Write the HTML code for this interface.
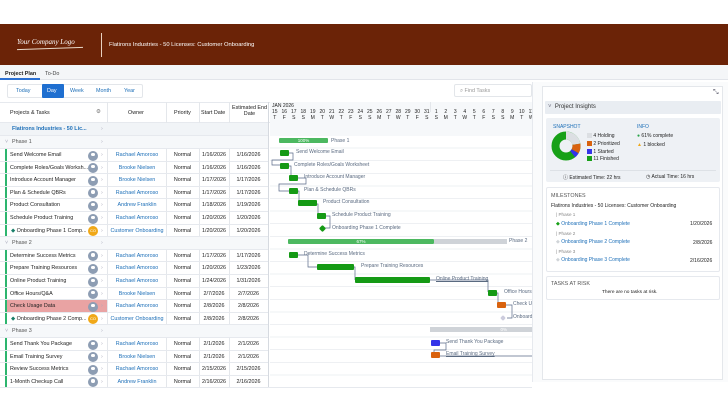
<!DOCTYPE html>
<html><head><meta charset="utf-8"><style>
*{margin:0;padding:0;box-sizing:border-box}
body{width:728px;height:410px;overflow:hidden;background:#fff;font-family:"Liberation Sans",sans-serif;font-size:5.4px;color:#222;position:relative}
.a{position:absolute}
.hdr{left:0;top:24px;width:728px;height:41px;background:#6b2307}
.row{position:absolute;left:0;width:268px;height:12.6px;border-bottom:1px solid #e6e9ee}
.row div{position:absolute;top:0;line-height:12px;white-space:nowrap}
.c1{left:10px}.ow{left:108px;width:58px;text-align:center;color:#1d6fb8}.pr{left:166px;width:33px;text-align:center}.sd{left:199px;width:30px;text-align:center}.ed{left:229px;width:39px;text-align:center}
.av{left:88px!important;top:1.5px!important;width:10px;height:10px;border-radius:50%;background:#8d9db3}
.av::after{content:"";position:absolute;left:3.3px;top:2px;width:3.4px;height:3.4px;border-radius:50%;background:#fff}
.co{left:88px!important;top:1.5px!important;width:10px;height:10px;border-radius:50%;background:#f0a818;color:#fff;font-size:4px;line-height:10px!important;text-align:center}
.ch{left:101px;color:#aab}
.bar{position:absolute;height:6px;border-radius:1px}
.lb{position:absolute;font-size:5px;color:#5a6a80;white-space:nowrap}
.g{background:#159a15}
.vl{position:absolute;width:1px;background:#e4e7eb}
</style></head><body>
<div class="a hdr"></div>
<div class="a" style="left:17px;top:38px;color:#fff;font-style:italic;font-size:7px;font-family:'Liberation Serif',serif">Your Company Logo</div>
<div class="a" style="left:17px;top:48px;width:66px;height:1px;background:#e8d8c8;transform:rotate(-2deg)"></div>
<div class="a" style="left:101px;top:33px;width:1px;height:24px;background:#e8d0c0"></div>
<div class="a" style="left:109px;top:42px;color:#fff;font-size:5.8px">Flatirons Industries - 50 Licenses: Customer Onboarding</div>
<div class="a" style="left:0;top:65px;width:728px;height:15px;background:#f4f6f8;border-bottom:1px solid #e2e5ea"></div>
<div class="a" style="left:5px;top:71px;font-weight:bold;font-size:5.4px">Project Plan</div>
<div class="a" style="left:45px;top:71px;font-size:5.4px;color:#444">To-Do</div>
<div class="a" style="left:0;top:78px;width:40px;height:2px;background:#2a6fd1"></div>
<div class="a" style="left:7px;top:84px;width:136px;height:14px;border:1px solid #e3e6ea;border-radius:2px"></div>
<div class="a" style="left:16px;top:88px;color:#1d6fb8">Today</div>
<div class="a" style="left:42px;top:84px;width:22px;height:14px;background:#1f6fd0;border-radius:1px"></div>
<div class="a" style="left:47px;top:88px;color:#fff">Day</div>
<div class="a" style="left:70px;top:88px;color:#1d6fb8">Week</div>
<div class="a" style="left:96px;top:88px;color:#1d6fb8">Month</div>
<div class="a" style="left:124px;top:88px;color:#1d6fb8">Year</div>
<div class="a" style="left:454px;top:84px;width:78px;height:13px;border:1px solid #e3e6ea;border-radius:2px"></div>
<div class="a" style="left:460px;top:88px;color:#999">⌕ Find Tasks</div>
<div class="a" style="left:0;top:102px;width:532px;height:21px;border-top:1px solid #e6e9ee;border-bottom:1px solid #e6e9ee"></div>
<div class="a" style="left:10px;top:110px">Projects &amp; Tasks</div>
<div class="a" style="left:96px;top:109px;color:#777">⚙</div>
<div class="a" style="left:128px;top:110px">Owner</div>
<div class="a" style="left:174px;top:110px">Priority</div>
<div class="a" style="left:201px;top:110px">Start Date</div>
<div class="a" style="left:230px;top:105px;width:39px;text-align:center;line-height:6px">Estimated End Date</div>
<div class="vl" style="left:107px;top:102px;height:285px"></div>
<div class="vl" style="left:166px;top:102px;height:285px"></div>
<div class="vl" style="left:199px;top:102px;height:285px"></div>
<div class="vl" style="left:229px;top:102px;height:285px"></div>
<div class="vl" style="left:268px;top:102px;height:285px;background:#d6dae0"></div>
<div class="a" style="left:0;top:123px;width:268px;height:13px;background:#f1f4f7"></div>
<div class="a" style="left:0;top:136px;width:268px;height:12.6px;background:#f6f8fa"></div>
<div class="a" style="left:0;top:237px;width:268px;height:12.6px;background:#f6f8fa"></div>
<div class="a" style="left:0;top:325px;width:268px;height:12.6px;background:#f6f8fa"></div>
<div class="a" style="left:6px;top:300.2px;width:101px;height:12.6px;background:#e9a3a3"></div>
<div class="a" style="left:5px;top:149px;width:1.5px;height:88px;background:#2db56e"></div>
<div class="a" style="left:5px;top:250px;width:1.5px;height:75px;background:#2db56e"></div>
<div class="a" style="left:5px;top:338px;width:1.5px;height:50px;background:#2db56e"></div>

<div class="row" style="top:123px"><div class="c1" style="left:12px;color:#1d6fb8;font-weight:bold">Flatirons Industries - 50 Lic...</div><div class="ch">›</div></div>
<div class="row" style="top:136px"><div style="left:5px;color:#aab">˅</div><div class="c1" style="left:12px;color:#555">Phase 1</div><div class="ch">›</div></div>
<div class="row" style="top:149px"><div class="c1">Send Welcome Email</div><div class="av"></div><div class="ch">›</div><div class="ow">Rachael Amoroso</div><div class="pr">Normal</div><div class="sd">1/16/2026</div><div class="ed">1/16/2026</div></div>
<div class="row" style="top:161.6px"><div class="c1">Complete Roles/Goals Worksh...</div><div class="av"></div><div class="ch">›</div><div class="ow">Brooke Nielsen</div><div class="pr">Normal</div><div class="sd">1/16/2026</div><div class="ed">1/16/2026</div></div>
<div class="row" style="top:174.2px"><div class="c1">Introduce Account Manager</div><div class="av"></div><div class="ch">›</div><div class="ow">Brooke Nielsen</div><div class="pr">Normal</div><div class="sd">1/17/2026</div><div class="ed">1/17/2026</div></div>
<div class="row" style="top:186.8px"><div class="c1">Plan &amp; Schedule QBRs</div><div class="av"></div><div class="ch">›</div><div class="ow">Rachael Amoroso</div><div class="pr">Normal</div><div class="sd">1/17/2026</div><div class="ed">1/17/2026</div></div>
<div class="row" style="top:199.4px"><div class="c1">Product Consultation</div><div class="av"></div><div class="ch">›</div><div class="ow">Andrew Franklin</div><div class="pr">Normal</div><div class="sd">1/18/2026</div><div class="ed">1/19/2026</div></div>
<div class="row" style="top:212px"><div class="c1">Schedule Product Training</div><div class="av"></div><div class="ch">›</div><div class="ow">Rachael Amoroso</div><div class="pr">Normal</div><div class="sd">1/20/2026</div><div class="ed">1/20/2026</div></div>
<div class="row" style="top:224.6px"><div class="c1" style="left:11px"><span style="color:#1a7f6a">◆</span> Onboarding Phase 1 Comp...</div><div class="co">CO</div><div class="ch">›</div><div class="ow">Customer Onboarding</div><div class="pr">Normal</div><div class="sd">1/20/2026</div><div class="ed">1/20/2026</div></div>
<div class="row" style="top:237.2px"><div style="left:5px;color:#aab">˅</div><div class="c1" style="left:12px;color:#555">Phase 2</div><div class="ch">›</div></div>
<div class="row" style="top:249.8px"><div class="c1">Determine Success Metrics</div><div class="av"></div><div class="ch">›</div><div class="ow">Rachael Amoroso</div><div class="pr">Normal</div><div class="sd">1/17/2026</div><div class="ed">1/17/2026</div></div>
<div class="row" style="top:262.4px"><div class="c1">Prepare Training Resources</div><div class="av"></div><div class="ch">›</div><div class="ow">Rachael Amoroso</div><div class="pr">Normal</div><div class="sd">1/20/2026</div><div class="ed">1/23/2026</div></div>
<div class="row" style="top:275px"><div class="c1">Online Product Training</div><div class="av"></div><div class="ch">›</div><div class="ow">Rachael Amoroso</div><div class="pr">Normal</div><div class="sd">1/24/2026</div><div class="ed">1/31/2026</div></div>
<div class="row" style="top:287.6px"><div class="c1">Office Hours/Q&amp;A</div><div class="av"></div><div class="ch">›</div><div class="ow">Brooke Nielsen</div><div class="pr">Normal</div><div class="sd">2/7/2026</div><div class="ed">2/7/2026</div></div>
<div class="row" style="top:300.2px"><div class="c1">Check Usage Data</div><div class="av"></div><div class="ch">›</div><div class="ow">Rachael Amoroso</div><div class="pr">Normal</div><div class="sd">2/8/2026</div><div class="ed">2/8/2026</div></div>
<div class="row" style="top:312.8px"><div class="c1" style="left:11px"><span style="color:#1a7f6a">◆</span> Onboarding Phase 2 Comp...</div><div class="co">CO</div><div class="ch">›</div><div class="ow">Customer Onboarding</div><div class="pr">Normal</div><div class="sd">2/8/2026</div><div class="ed">2/8/2026</div></div>
<div class="row" style="top:325.4px"><div style="left:5px;color:#aab">˅</div><div class="c1" style="left:12px;color:#555">Phase 3</div><div class="ch">›</div></div>
<div class="row" style="top:338px"><div class="c1">Send Thank You Package</div><div class="av"></div><div class="ch">›</div><div class="ow">Rachael Amoroso</div><div class="pr">Normal</div><div class="sd">2/1/2026</div><div class="ed">2/1/2026</div></div>
<div class="row" style="top:350.6px"><div class="c1">Email Training Survey</div><div class="av"></div><div class="ch">›</div><div class="ow">Brooke Nielsen</div><div class="pr">Normal</div><div class="sd">2/1/2026</div><div class="ed">2/1/2026</div></div>
<div class="row" style="top:363.2px"><div class="c1">Review Success Metrics</div><div class="av"></div><div class="ch">›</div><div class="ow">Rachael Amoroso</div><div class="pr">Normal</div><div class="sd">2/15/2026</div><div class="ed">2/15/2026</div></div>
<div class="row" style="top:375.8px"><div class="c1">1-Month Checkup Call</div><div class="av"></div><div class="ch">›</div><div class="ow">Andrew Franklin</div><div class="pr">Normal</div><div class="sd">2/16/2026</div><div class="ed">2/16/2026</div></div>

<div class="a" style="left:270px;top:102px;width:262px;height:34px;background:#f6f8fa"></div>
<div class="a" style="left:272px;top:103px;font-size:5px">JAN 2026</div>
<div class="vl" style="left:430px;top:102px;height:10px"></div>
<div class="a" style="left:270px;top:109px;width:265px;font-size:5px;white-space:nowrap;letter-spacing:0">
<span style="display:inline-block;width:9.5px;text-align:center">15</span><span style="display:inline-block;width:9.5px;text-align:center">16</span><span style="display:inline-block;width:9.5px;text-align:center">17</span><span style="display:inline-block;width:9.5px;text-align:center">18</span><span style="display:inline-block;width:9.5px;text-align:center">19</span><span style="display:inline-block;width:9.5px;text-align:center">20</span><span style="display:inline-block;width:9.5px;text-align:center">21</span><span style="display:inline-block;width:9.5px;text-align:center">22</span><span style="display:inline-block;width:9.5px;text-align:center">23</span><span style="display:inline-block;width:9.5px;text-align:center">24</span><span style="display:inline-block;width:9.5px;text-align:center">25</span><span style="display:inline-block;width:9.5px;text-align:center">26</span><span style="display:inline-block;width:9.5px;text-align:center">27</span><span style="display:inline-block;width:9.5px;text-align:center">28</span><span style="display:inline-block;width:9.5px;text-align:center">29</span><span style="display:inline-block;width:9.5px;text-align:center">30</span><span style="display:inline-block;width:9.5px;text-align:center">31</span><span style="display:inline-block;width:9.5px;text-align:center">1</span><span style="display:inline-block;width:9.5px;text-align:center">2</span><span style="display:inline-block;width:9.5px;text-align:center">3</span><span style="display:inline-block;width:9.5px;text-align:center">4</span><span style="display:inline-block;width:9.5px;text-align:center">5</span><span style="display:inline-block;width:9.5px;text-align:center">6</span><span style="display:inline-block;width:9.5px;text-align:center">7</span><span style="display:inline-block;width:9.5px;text-align:center">8</span><span style="display:inline-block;width:9.5px;text-align:center">9</span><span style="display:inline-block;width:9.5px;text-align:center">10</span><span style="display:inline-block;width:9.5px;text-align:center">11</span><br>
<span style="display:inline-block;width:9.5px;text-align:center">T</span><span style="display:inline-block;width:9.5px;text-align:center">F</span><span style="display:inline-block;width:9.5px;text-align:center">S</span><span style="display:inline-block;width:9.5px;text-align:center">S</span><span style="display:inline-block;width:9.5px;text-align:center">M</span><span style="display:inline-block;width:9.5px;text-align:center">T</span><span style="display:inline-block;width:9.5px;text-align:center">W</span><span style="display:inline-block;width:9.5px;text-align:center">T</span><span style="display:inline-block;width:9.5px;text-align:center">F</span><span style="display:inline-block;width:9.5px;text-align:center">S</span><span style="display:inline-block;width:9.5px;text-align:center">S</span><span style="display:inline-block;width:9.5px;text-align:center">M</span><span style="display:inline-block;width:9.5px;text-align:center">T</span><span style="display:inline-block;width:9.5px;text-align:center">W</span><span style="display:inline-block;width:9.5px;text-align:center">T</span><span style="display:inline-block;width:9.5px;text-align:center">F</span><span style="display:inline-block;width:9.5px;text-align:center">S</span><span style="display:inline-block;width:9.5px;text-align:center">S</span><span style="display:inline-block;width:9.5px;text-align:center">M</span><span style="display:inline-block;width:9.5px;text-align:center">T</span><span style="display:inline-block;width:9.5px;text-align:center">W</span><span style="display:inline-block;width:9.5px;text-align:center">T</span><span style="display:inline-block;width:9.5px;text-align:center">F</span><span style="display:inline-block;width:9.5px;text-align:center">S</span><span style="display:inline-block;width:9.5px;text-align:center">S</span><span style="display:inline-block;width:9.5px;text-align:center">M</span><span style="display:inline-block;width:9.5px;text-align:center">T</span><span style="display:inline-block;width:9.5px;text-align:center">W</span></div>

<div class="a" style="left:270px;top:136px;width:262px;height:252px;overflow:hidden">
<div style="position:absolute;inset:0;background:repeating-linear-gradient(#fff 0 11.6px,#eef0f3 11.6px 12.6px)"></div>
<svg width="262" height="252" style="position:absolute;left:0;top:0" fill="none" stroke="#5a6a88" stroke-width="0.7">
<path d="M19 17 H23 V24 H2 V29 H10"/>
<path d="M19 30 H21 V42"/>
<path d="M28 42 H36 V48 H9 V55 H19"/>
<path d="M28 55 H29 V67"/>
<path d="M47 68 H48 V80"/>
<path d="M56 80 H60 V92 H55"/>
<path d="M28 119 H38 V131 H47"/>
<path d="M84 131 H85 V144"/>
<path d="M160 144 H218 V156"/>
<path d="M227 157 H228 V169"/>
<path d="M236 169 H242 V182 H237"/>
<path d="M170 207 H176 V214 H164 V219 H161"/>
<path d="M170 220 H262"/>
</svg>
<div class="bar" style="left:9px;top:2px;width:49px;height:5px;background:#4cb860;color:#fff;font-size:4.5px;text-align:center;line-height:5px">100%</div>
<div class="lb" style="left:61px;top:2px">Phase 1</div>
<div class="bar g" style="left:10px;top:14px;width:9px"></div><div class="lb" style="left:26px;top:13px">Send Welcome Email</div>
<div class="bar g" style="left:10px;top:26.6px;width:9px"></div><div class="lb" style="left:24px;top:25.6px">Complete Roles/Goals Worksheet</div>
<div class="bar g" style="left:19px;top:39.2px;width:9px"></div><div class="lb" style="left:34px;top:38.2px">Introduce Account Manager</div>
<div class="bar g" style="left:19px;top:51.8px;width:9px"></div><div class="lb" style="left:34px;top:50.8px">Plan &amp; Schedule QBRs</div>
<div class="bar g" style="left:28px;top:64.4px;width:19px"></div><div class="lb" style="left:53px;top:63.4px">Product Consultation</div>
<div class="bar g" style="left:47px;top:77px;width:9px"></div><div class="lb" style="left:62px;top:76px">Schedule Product Training</div>
<div class="bar g" style="left:50px;top:90px;width:5px;height:5px;transform:rotate(45deg)"></div><div class="lb" style="left:62px;top:88.6px">Onboarding Phase 1 Complete</div>
<div class="bar" style="left:18px;top:103px;width:146px;height:5px;background:#4cb860;color:#fff;font-size:4.5px;text-align:center;line-height:5px">67%</div>
<div class="bar" style="left:164px;top:103px;width:73px;height:5px;background:#cfd3d8;border-radius:0"></div>
<div class="lb" style="left:239px;top:102px">Phase 2</div>
<div class="bar g" style="left:19px;top:115.8px;width:9px"></div><div class="lb" style="left:34px;top:114.8px">Determine Success Metrics</div>
<div class="bar g" style="left:47px;top:128.4px;width:37px"></div><div class="lb" style="left:91px;top:127.4px">Prepare Training Resources</div>
<div class="bar g" style="left:85px;top:141px;width:75px"></div><div class="lb" style="left:166px;top:140px;text-decoration:underline">Online Product Training</div>
<div class="bar g" style="left:218px;top:153.6px;width:9px"></div><div class="lb" style="left:234px;top:152.6px">Office Hours</div>
<div class="bar" style="left:227px;top:166.2px;width:9px;background:#d9620e"></div><div class="lb" style="left:243px;top:165.2px">Check U</div>
<div class="bar" style="left:231px;top:180px;width:4px;height:4px;background:#ccd;transform:rotate(45deg)"></div><div class="lb" style="left:243px;top:177.8px">Onboard</div>
<div class="bar" style="left:160px;top:191px;width:102px;height:5px;background:#cfd3d8;color:#fff;font-size:4.5px;text-align:right;padding-right:25px;line-height:5px;border-radius:0">0%</div>
<div class="bar" style="left:161px;top:203.6px;width:9px;background:#3434e8"></div><div class="lb" style="left:176px;top:202.6px">Send Thank You Package</div>
<div class="bar" style="left:161px;top:216.2px;width:9px;background:#d9620e"></div><div class="lb" style="left:176px;top:215.2px;text-decoration:underline">Email Training Survey</div>
</div>
<div class="a" style="left:0;top:387px;width:532px;height:1px;background:#e6e9ee"></div>

<div class="a" style="left:532px;top:82px;width:196px;height:300px;border-left:1px solid #e6e9ee;background:#fafbfc"></div>
<div class="a" style="left:542px;top:86px;width:181px;height:294px;background:#fff;border:1px solid #e4e7eb"></div>
<div class="a" style="left:713px;top:89px;color:#556;font-size:7px">⤡</div>
<div class="a" style="left:545px;top:101px;width:176px;height:13px;background:#e9edf2;border-radius:1px"></div>
<div class="a" style="left:548px;top:104px;font-size:6px;color:#333"><span style="color:#778">˅</span>&nbsp; Project Insights</div>
<div class="a" style="left:546px;top:118px;width:174px;height:64px;background:#eef1f5;border-radius:2px"></div>
<div class="a" style="left:553px;top:124px;color:#1d6fb8;font-size:5px">SNAPSHOT</div>
<svg class="a" style="left:551px;top:131px" width="30" height="30" viewBox="-15 -15 30 30">
<circle r="10.5" fill="none" stroke="#17a017" stroke-width="8"/>
<circle r="10.5" fill="none" stroke="#dcdfe3" stroke-width="8" stroke-dasharray="14.6 66" transform="rotate(-90)"/>
<circle r="10.5" fill="none" stroke="#d9620e" stroke-width="8" stroke-dasharray="7.3 66" stroke-dashoffset="-14.6" transform="rotate(-90)"/>
<circle r="10.5" fill="none" stroke="#3434e8" stroke-width="8" stroke-dasharray="3.7 66" stroke-dashoffset="-21.9" transform="rotate(-90)"/>
</svg>
<div class="a" style="left:587px;top:133px;line-height:7.8px;font-size:5px">
<div><span style="display:inline-block;width:5px;height:5px;background:#dcdfe3;vertical-align:-1px"></span> 4 Holding</div>
<div><span style="display:inline-block;width:5px;height:5px;background:#d9620e;vertical-align:-1px"></span> 2 Prioritized</div>
<div><span style="display:inline-block;width:5px;height:5px;background:#3434e8;vertical-align:-1px"></span> 1 Started</div>
<div><span style="display:inline-block;width:5px;height:5px;background:#17a017;vertical-align:-1px"></span> 11 Finished</div></div>
<div class="a" style="left:637px;top:124px;color:#1d6fb8;font-size:5px">INFO</div>
<div class="a" style="left:637px;top:133px;font-size:5px"><span style="color:#2aa44a">●</span> 61% complete</div>
<div class="a" style="left:637px;top:142px;font-size:5px"><span style="color:#f0a818">▲</span> 1 blocked</div>
<div class="a" style="left:550px;top:170px;width:166px;height:1px;background:#dde1e6"></div>
<div class="a" style="left:563px;top:174px;font-size:5px">ⓘ Estimated Time: 22 hrs</div>
<div class="a" style="left:646px;top:174px;font-size:5px">◷ Actual Time: 16 hrs</div>
<div class="a" style="left:546px;top:187px;width:174px;height:85px;border:1px solid #e6e9ee;border-radius:2px"></div>
<div class="a" style="left:551px;top:193px;color:#555;font-size:5.4px">MILESTONES</div>
<div class="a" style="left:551px;top:203px;font-size:5px">Flatirons Industries - 50 Licenses: Customer Onboarding</div>
<div class="a" style="left:556px;top:212px;font-size:4.6px;color:#888">| Phase 1</div>
<div class="a" style="left:556px;top:221px;font-size:5px;color:#1d6fb8"><span style="color:#17a017">◆</span> Onboarding Phase 1 Complete</div>
<div class="a" style="left:690px;top:221px;font-size:5px">1/20/2026</div>
<div class="a" style="left:556px;top:231px;font-size:4.6px;color:#888">| Phase 2</div>
<div class="a" style="left:556px;top:239px;font-size:5px;color:#1d6fb8"><span style="color:#d0d4d8">◆</span> Onboarding Phase 2 Complete</div>
<div class="a" style="left:693px;top:240px;font-size:5px">2/8/2026</div>
<div class="a" style="left:556px;top:249px;font-size:4.6px;color:#888">| Phase 3</div>
<div class="a" style="left:556px;top:257px;font-size:5px;color:#1d6fb8"><span style="color:#d0d4d8">◆</span> Onboarding Phase 3 Complete</div>
<div class="a" style="left:690px;top:258px;font-size:5px">2/16/2026</div>
<div class="a" style="left:546px;top:276px;width:174px;height:24px;border:1px solid #e6e9ee;border-radius:2px"></div>
<div class="a" style="left:551px;top:281px;color:#555;font-size:5.4px">TASKS AT RISK</div>
<div class="a" style="left:602px;top:290px;font-size:4.8px">There are no tasks at risk.</div>
</body></html>
